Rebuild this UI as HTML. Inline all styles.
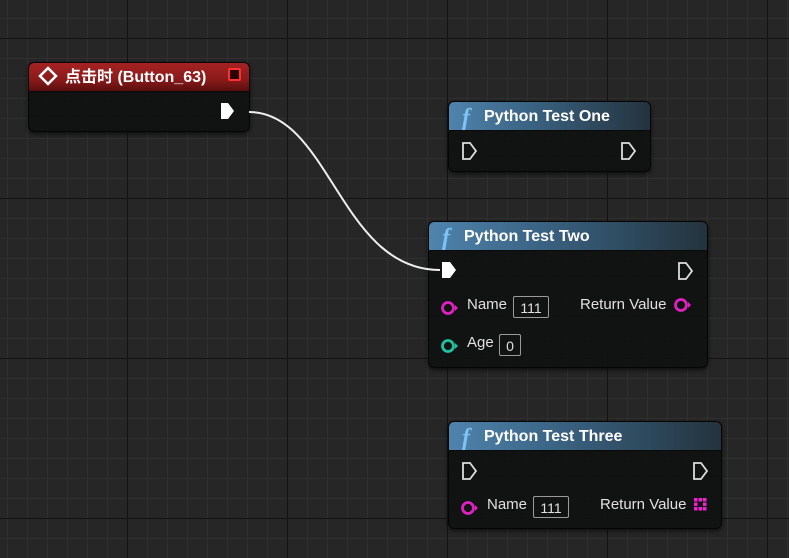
<!DOCTYPE html>
<html><head><meta charset="utf-8"><style>
body{margin:0;width:789px;height:558px;overflow:hidden;background:#262626;font-family:"Liberation Sans","Noto Sans CJK SC",sans-serif}
.bg{position:absolute;left:0;top:0;width:789px;height:558px;
background-image:
linear-gradient(90deg,#131313 1px,transparent 1px),
linear-gradient(0deg,#131313 1px,transparent 1px),
linear-gradient(90deg,#303030 1px,transparent 1px),
linear-gradient(0deg,#303030 1px,transparent 1px);
background-size:160px 160px,160px 160px,20px 20px,20px 20px;
background-position:127px 0,0 39px,7px 0,0 19px;}
.node{position:absolute;background:rgba(16,18,17,0.94);border:1px solid #050505;border-radius:6px;box-shadow:0 2px 4px rgba(0,0,0,.6);overflow:hidden}
.hdr{height:28px;color:#fff;font-weight:bold;font-size:16px;line-height:30px;padding-left:35px;position:relative;border-bottom:1px solid #0a0a0a}
.blue{background:linear-gradient(90deg,#4f84ad 0%,#3a6383 40%,#24333d 100%)}
.red{background:linear-gradient(180deg,#a52222 0%,#8a1a1a 60%,#5a0e0e 100%)}
.f{position:absolute;left:13px;top:1px;font-family:"Liberation Serif",serif;font-style:italic;color:#7cc4f4;font-size:24px;font-weight:bold}
.t{position:absolute;color:#e0e0e0;font-size:15px}
.box{position:absolute;border:1px solid #9a9a9a;border-radius:2px;color:#e0e0e0;font-size:14px;text-align:center;height:20px;line-height:22px}
svg{position:absolute;left:0;top:0}
</style></head><body>
<div class="bg"></div>

<div class="node" style="left:28px;top:62px;width:220px;height:68px">
<div class="hdr red" style="padding-left:36px">点击时 (Button_63)</div>
</div>
<div class="node" style="left:448px;top:101px;width:201px;height:69px">
<div class="hdr blue"><span class="f">f</span>Python Test One</div>
</div>
<div class="node" style="left:428px;top:221px;width:278px;height:145px">
<div class="hdr blue"><span class="f">f</span>Python Test Two</div>
</div>
<div class="node" style="left:448px;top:421px;width:272px;height:106px">
<div class="hdr blue"><span class="f">f</span>Python Test Three</div>
</div>

<div class="t" style="left:467px;top:296px">Name</div>
<div class="box" style="left:513px;top:296px;width:34px">111</div>
<div class="t" style="left:580px;top:296px">Return Value</div>
<div class="t" style="left:467px;top:334px">Age</div>
<div class="box" style="left:499px;top:334px;width:20px">0</div>

<div class="t" style="left:487px;top:496px">Name</div>
<div class="box" style="left:533px;top:496px;width:34px">111</div>
<div class="t" style="left:600px;top:496px">Return Value</div>

<svg width="789" height="558">
<path d="M249 112 C330 112 340 270 440 270" stroke="#eee" stroke-width="2" fill="none"/>
<path d="M48 68 L56 76 L48 84 L40 76 Z" fill="none" stroke="#fff" stroke-width="2.5"/>
<rect x="229" y="69" width="11" height="11" fill="#2a0404" stroke="#ff3030" stroke-width="2" rx="1"/>
<path d="M221 103 h7 l6 8 l-6 8 h-7 z" fill="#fff"/>
<path d="M463 143 h7 l6 8 l-6 8 h-7 z" fill="none" stroke="#ddd" stroke-width="1.8"/>
<path d="M622 143 h7 l6 8 l-6 8 h-7 z" fill="none" stroke="#ddd" stroke-width="1.8"/>
<path d="M442 262 h8 l6 8 l-6 8 h-8 z" fill="#fff"/>
<path d="M679 263 h7 l6 8 l-6 8 h-7 z" fill="none" stroke="#ddd" stroke-width="1.8"/>
<circle cx="448" cy="308" r="5.5" fill="none" stroke="#e020c0" stroke-width="2.8"/><path d="M455 305 l3 3 l-3 3z" fill="#e020c0"/>
<circle cx="681" cy="305" r="5.5" fill="none" stroke="#e020c0" stroke-width="2.8"/><path d="M688 302 l3 3 l-3 3z" fill="#e020c0"/>
<circle cx="448" cy="346" r="5.5" fill="none" stroke="#20c0a0" stroke-width="2.8"/><path d="M455 343 l3 3 l-3 3z" fill="#20c0a0"/>
<path d="M463 463 h7 l6 8 l-6 8 h-7 z" fill="none" stroke="#ddd" stroke-width="1.8"/>
<path d="M694 463 h7 l6 8 l-6 8 h-7 z" fill="none" stroke="#ddd" stroke-width="1.8"/>
<circle cx="468" cy="508" r="5.5" fill="none" stroke="#e020c0" stroke-width="2.8"/><path d="M475 505 l3 3 l-3 3z" fill="#e020c0"/>
<g fill="#f020d0">
<rect x="694" y="498" width="3.5" height="3.5"/><rect x="698.5" y="498" width="3.5" height="3.5"/><rect x="703" y="498" width="3.5" height="3.5"/>
<rect x="694" y="502.5" width="3.5" height="3.5"/><rect x="703" y="502.5" width="3.5" height="3.5"/>
<rect x="694" y="507" width="3.5" height="3.5"/><rect x="698.5" y="507" width="3.5" height="3.5"/><rect x="703" y="507" width="3.5" height="3.5"/>
</g>
</svg>
</body></html>
